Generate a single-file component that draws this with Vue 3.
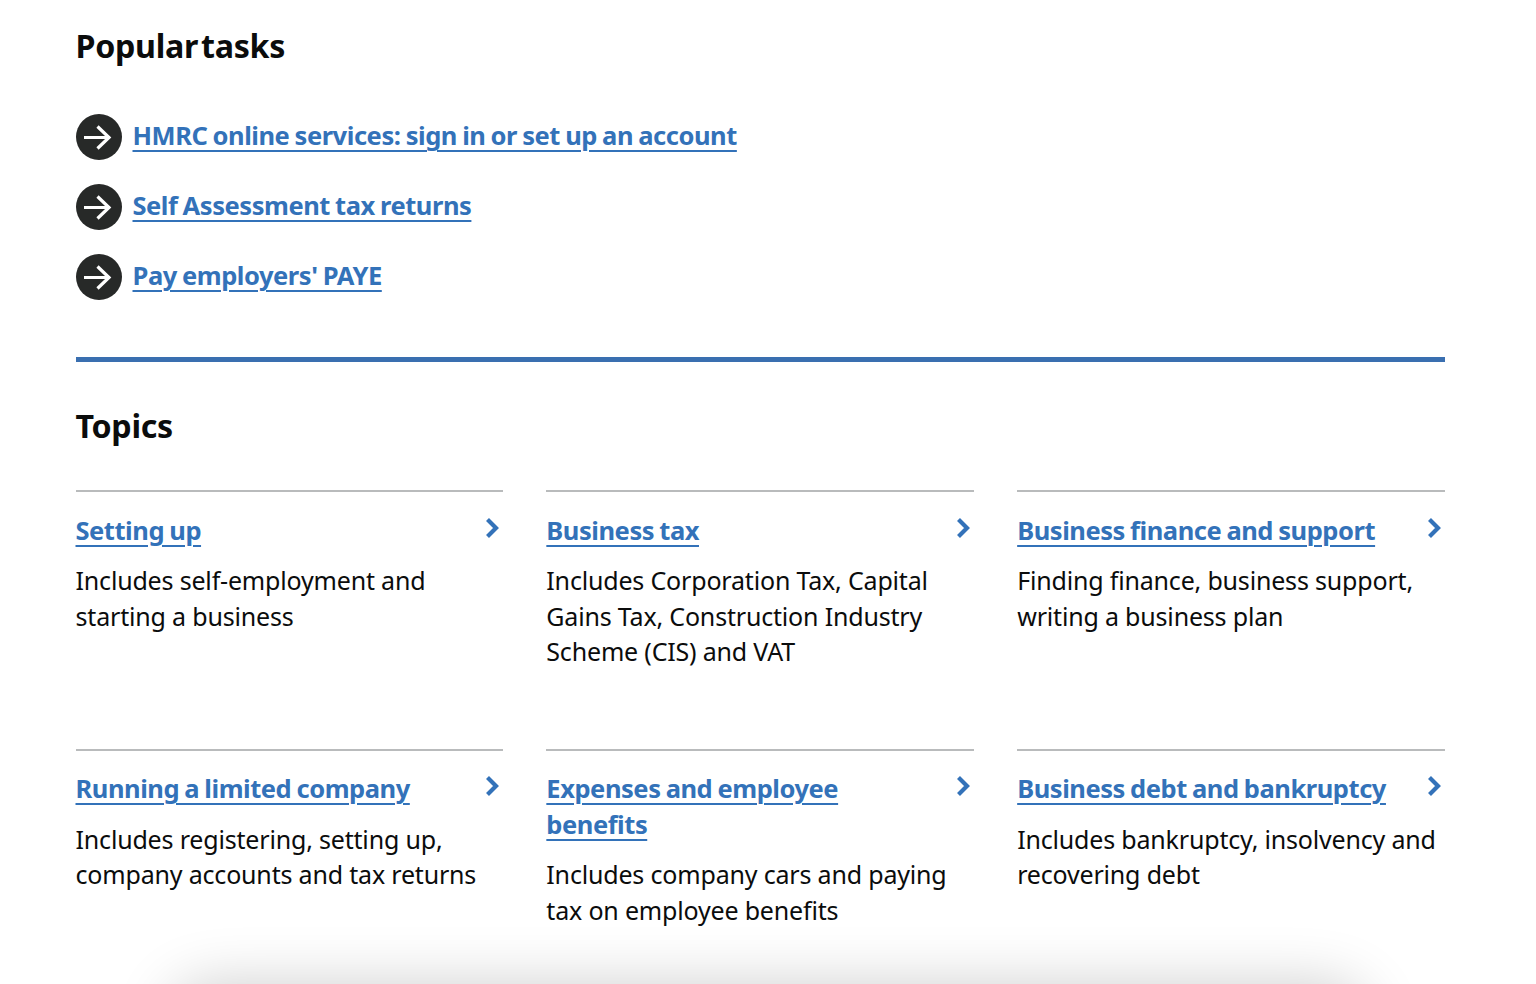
<script setup>
const tasks = ['HMRC online services: sign in or set up an account', 'Self Assessment tax returns', "Pay employers' PAYE"]
const topics = [
  { t: 'Setting up', d: 'Includes self-employment and starting a business' },
  { t: 'Business tax', d: 'Includes Corporation Tax, Capital Gains Tax, Construction Industry Scheme (CIS) and VAT' },
  { t: 'Business finance and support', d: 'Finding finance, business support, writing a business plan' },
  { t: 'Running a limited company', d: 'Includes registering, setting up, company accounts and tax returns' },
  { t: 'Expenses and employee benefits', d: 'Includes company cars and paying tax on employee benefits' },
  { t: 'Business debt and bankruptcy', d: 'Includes bankruptcy, insolvency and recovering debt' },
]
</script>

<template>
  <main class="page">
    <h2 class="heading first">Popular tasks</h2>
    <ul class="tasks">
      <li v-for="task in tasks" :key="task" class="task">
        <svg class="arrow" viewBox="0 0 46 46" width="46" height="46" aria-hidden="true">
          <circle cx="23" cy="23" r="23" fill="#272928" />
          <path d="M8 23.5H34M21.5 12.5L33 23.5L21.5 34.5" fill="none" stroke="#fff" stroke-width="3.2" />
        </svg>
        <a href="#" class="link task-link">{{ task }}</a>
      </li>
    </ul>
    <hr class="rule" />
    <h2 class="heading">Topics</h2>
    <div class="grid">
      <section v-for="topic in topics" :key="topic.t" class="topic">
        <div class="topic-head">
          <a href="#" class="link">{{ topic.t }}</a>
          <svg class="chev" viewBox="0 0 14 20" width="14" height="20" aria-hidden="true">
            <path d="M2.5 1.5L11 10L2.5 18.5" fill="none" stroke="#3372b9" stroke-width="4.2" />
          </svg>
        </div>
        <p class="desc">{{ topic.d }}</p>
      </section>
    </div>
    <div class="shadow"></div>
  </main>
</template>

<style>
html, body { margin: 0; background: #fff; }
</style>

<style scoped>
.page {
  position: relative;
  box-sizing: border-box;
  height: 984px;
  overflow: hidden;
  padding: 0 91px 0 75.5px;
  font-family: "Noto Sans", "Open Sans", sans-serif;
  color: #0b0c0c;
}
.heading {
  margin: 0 0 41px;
  font-size: 32.2px;
  line-height: 46px;
  font-weight: 700;
  letter-spacing: -0.3px;
  word-spacing: -5px;
}
.heading.first { padding-top: 23px; margin-bottom: 45px; }
.tasks { list-style: none; margin: 0; padding: 0; }
.task {
  display: flex;
  align-items: center;
  gap: 11px;
  height: 46px;
  margin-bottom: 24px;
}
.arrow { flex: none; }
.link {
  color: #3372b9;
  font-weight: 700;
  font-size: 25.5px;
  line-height: 35.5px;
  letter-spacing: -0.45px;
  word-spacing: -1px;
  text-decoration: underline;
  text-decoration-thickness: 2px;
  text-underline-offset: 5px;
}
.task-link { position: relative; top: -1px; }
.rule {
  height: 5px;
  margin: 57px 0 41px;
  border: 0;
  background: #3a6fb0;
}
.grid {
  display: grid;
  grid-template-columns: repeat(3, 1fr);
  grid-auto-rows: 258.5px;
  column-gap: 43px;
}
.topic { border-top: 2px solid #b9bbbc; padding-top: 20.5px; }
.topic-head {
  display: flex;
  justify-content: space-between;
  align-items: flex-start;
  gap: 30px;
}
.chev { flex: none; margin: 5px 4px 0 0; }
.desc {
  margin: 15px 0 0;
  font-size: 25px;
  line-height: 35.5px;
  letter-spacing: -0.18px;
}
.shadow {
  position: absolute;
  left: 190px;
  right: 190px;
  top: 1005px;
  height: 60px;
  border-radius: 20px;
  box-shadow: 0 0 60px 20px rgba(0, 0, 0, 0.2);
}
</style>
